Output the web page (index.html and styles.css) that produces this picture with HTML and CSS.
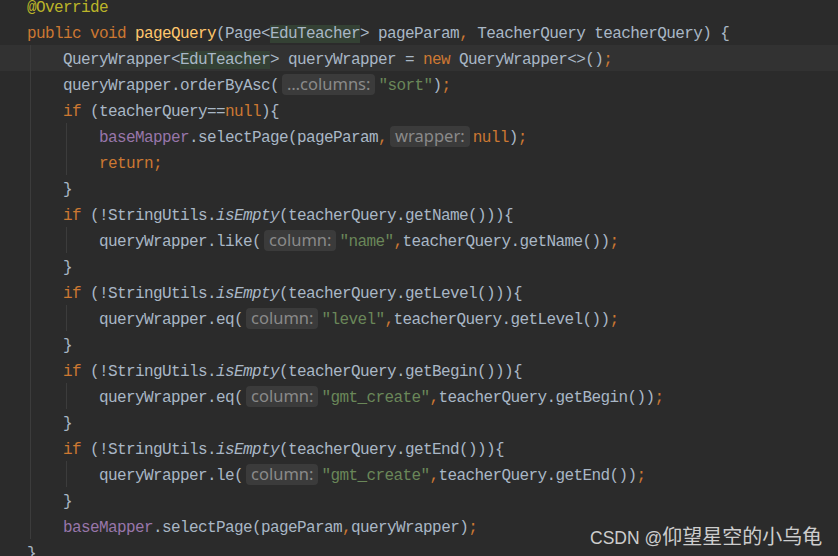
FILE: index.html
```html
<!DOCTYPE html>
<html>
<head>
<meta charset="utf-8">
<link rel="stylesheet" href="styles.css">
</head>
<body>
<div class="editor">
<div class="ln"><span class="an">@Override</span></div>
<div class="ln"><span class="k">public void </span><span class="fn">pageQuery</span>(Page&lt;<span class="hl">EduTeacher</span>&gt; pageParam<span class="k">,</span> TeacherQuery teacherQuery) {</div>
<div class="ln g1 cur">    QueryWrapper&lt;<span class="hl">EduTeacher</span>&gt; queryWrapper = <span class="k">new</span> QueryWrapper&lt;&gt;()<span class="k">;</span></div>
<div class="ln g1">    queryWrapper.orderByAsc(<span class="h">…columns:</span><span class="s">"sort"</span>)<span class="k">;</span></div>
<div class="ln g1">    <span class="k">if</span> (teacherQuery==<span class="k">null</span>){</div>
<div class="ln g2">        <span class="f">baseMapper</span>.selectPage(pageParam<span class="k">,</span><span class="h">wrapper:</span><span class="k">null</span>)<span class="k">;</span></div>
<div class="ln g2">        <span class="k">return;</span></div>
<div class="ln g1">    }</div>
<div class="ln g1">    <span class="k">if</span> (!StringUtils.<span class="i">isEmpty</span>(teacherQuery.getName())){</div>
<div class="ln g2">        queryWrapper.like(<span class="h">column:</span><span class="s">"name"</span><span class="k">,</span>teacherQuery.getName())<span class="k">;</span></div>
<div class="ln g1">    }</div>
<div class="ln g1">    <span class="k">if</span> (!StringUtils.<span class="i">isEmpty</span>(teacherQuery.getLevel())){</div>
<div class="ln g2">        queryWrapper.eq(<span class="h">column:</span><span class="s">"level"</span><span class="k">,</span>teacherQuery.getLevel())<span class="k">;</span></div>
<div class="ln g1">    }</div>
<div class="ln g1">    <span class="k">if</span> (!StringUtils.<span class="i">isEmpty</span>(teacherQuery.getBegin())){</div>
<div class="ln g2">        queryWrapper.eq(<span class="h">column:</span><span class="s">"gmt_create"</span><span class="k">,</span>teacherQuery.getBegin())<span class="k">;</span></div>
<div class="ln g1">    }</div>
<div class="ln g1">    <span class="k">if</span> (!StringUtils.<span class="i">isEmpty</span>(teacherQuery.getEnd())){</div>
<div class="ln g2">        queryWrapper.le(<span class="h">column:</span><span class="s">"gmt_create"</span><span class="k">,</span>teacherQuery.getEnd())<span class="k">;</span></div>
<div class="ln g1">    }</div>
<div class="ln g1">    <span class="f">baseMapper</span>.selectPage(pageParam<span class="k">,</span>queryWrapper)<span class="k">;</span></div>
<div class="ln">}</div>
</div>
<div class="watermark">CSDN @<span class="cjk">仰望星空的小乌龟</span></div>
</body>
</html>
```
FILE: styles.css
```css
html, body {
  margin: 0;
  padding: 0;
  background: #2b2b2b;
  width: 838px;
  height: 556px;
  overflow: hidden;
}

body {
  position: relative;
}

.editor {
  margin-top: -7px;
  font-family: "Liberation Mono", "DejaVu Sans Mono", monospace;
  font-size: 16px;
  letter-spacing: -0.6px;
  color: #a9b7c6;
}

.ln {
  box-sizing: border-box;
  height: 26px;
  padding: 4px 0 0 27px;
  line-height: 22px;
  white-space: pre;
  background-repeat: no-repeat;
}

.g1 {
  background-image: linear-gradient(#3c3c3c, #3c3c3c);
  background-position: 30px 0;
  background-size: 1px 100%;
}

.g2 {
  background-image: linear-gradient(#3c3c3c, #3c3c3c), linear-gradient(#3c3c3c, #3c3c3c);
  background-position: 30px 0, 66px 0;
  background-size: 1px 100%, 1px 100%;
}

.cur {
  background-color: #323232;
}

.k { color: #cc7832; }
.an { color: #bbb529; }
.fn { color: #ffc66d; }
.s { color: #6a8759; }
.f { color: #9876aa; }
.i { font-style: italic; }
.hl { background: #344134; }

.h {
  display: inline-block;
  font-family: "Noto Sans", "Open Sans", sans-serif;
  font-size: 16.5px;
  letter-spacing: 0;
  line-height: 19px;
  padding: 0 5px 2px 5px;
  margin: -1px 3px 0 3px;
  background: #3b3b3b;
  color: #8a8a8a;
  border-radius: 4px;
}

.watermark {
  position: absolute;
  left: 590px;
  top: 524px;
  font-family: "Liberation Sans", Arial, sans-serif;
  font-size: 17.5px;
  line-height: 24px;
  color: #cdcdcd;
  white-space: nowrap;
}

.cjk {
  font-family: "Noto Sans CJK SC", sans-serif;
  font-size: 20px;
  letter-spacing: 0;
}
```
